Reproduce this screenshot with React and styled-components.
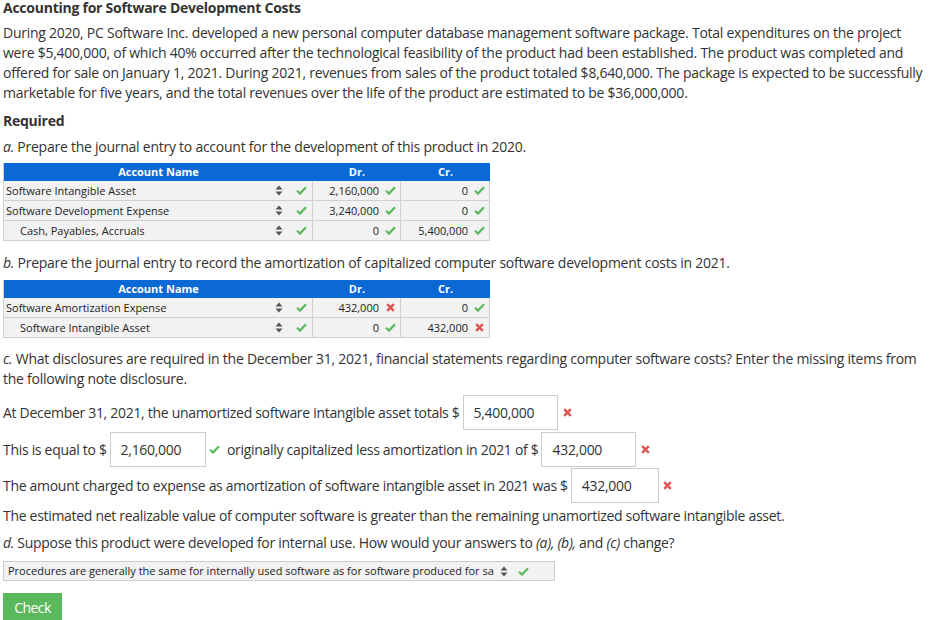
import styled, { createGlobalStyle } from "styled-components";

const GlobalStyle = createGlobalStyle`
  body {
    margin: 0;
    background: #fff;
    font-family: "Open Sans", "Noto Sans", sans-serif;
    color: #333;
  }
`;

const Page = styled.div`
  padding: 0 3px;
  width: 927px;
  font-size: 14px;
  line-height: 20px;
  letter-spacing: -0.25px;
`;

const Title = styled.h3`
  margin: 0;
  font-size: 14px;
  font-weight: 700;
  line-height: 16px;
`;

const Para = styled.p`
  margin: ${(p) => p.$mt || 0}px 0 0;
  font-size: 14px;
  line-height: 20px;
`;

const Line = styled.div`
  margin-top: ${(p) => p.$mt || 0}px;
  font-size: 14px;
  line-height: 20px;
  letter-spacing: -0.3px;
  display: flex;
  align-items: center;
  white-space: pre;
`;

const Heading = styled.p`
  margin: 8px 0 0;
  font-weight: 700;
`;

const Journal = styled.div`
  margin-top: ${(p) => p.$mt}px;
  display: grid;
  grid-template-columns: 309px 88px 89px;
  width: 486px;
  font-size: 11px;
  letter-spacing: 0;
  color: #222;
  border-left: 1px solid #d0d0d0;
`;

const HeadCell = styled.div`
  background: #0b69d6;
  color: #fff;
  font-weight: 700;
  height: 18px;
  line-height: 18px;
  text-align: center;
`;

const Cell = styled.div`
  background: #f2f2f2;
  border-right: 1px solid #d0d0d0;
  border-bottom: 1px solid #d0d0d0;
  height: 20px;
  box-sizing: border-box;
  padding: 0 4px 0 ${(p) => (p.$indent ? 16 : 2)}px;
  display: flex;
  align-items: center;
  justify-content: ${(p) => (p.$num ? "flex-end" : "flex-start")};
  gap: 5px;
  white-space: nowrap;
`;

const Grow = styled.span`
  flex: 1;
`;

const Arrows = styled.span`
  display: inline-flex;
  width: 20px;
  justify-content: center;
`;

const MarkBox = styled.span`
  display: inline-flex;
  width: ${(p) => p.$w || 12}px;
  justify-content: center;
  align-items: center;
`;

const AnswerBox = styled.span`
  display: inline-flex;
  align-items: center;
  height: 35px;
  width: ${(p) => p.$w}px;
  border: 1px solid #ccc;
  padding-left: 10px;
  box-sizing: border-box;
  margin-left: 3px;
`;

const SelectBar = styled.div`
  margin-top: 8px;
  width: 552px;
  height: 20px;
  box-sizing: border-box;
  border: 1px solid #ccc;
  background: #f2f2f2;
  display: flex;
  align-items: center;
  padding-left: 4px;
  font-size: 11px;
  letter-spacing: 0;
  color: #222;
`;

const CheckButton = styled.button`
  margin-top: 12px;
  display: block;
  background: #5cb85c;
  color: #fff;
  border: none;
  font-family: "Open Sans", sans-serif;
  font-size: 14px;
  letter-spacing: -0.6px;
  height: 28px;
  width: 59px;
  padding: 0;
`;

const Tick = ({ w }) => (
  <MarkBox $w={w}>
    <svg width="11" height="9" viewBox="0 0 11 9">
      <path d="M1 4.8 L4 7.6 L10 1.2" fill="none" stroke="#5cb85c" strokeWidth="2.2" />
    </svg>
  </MarkBox>
);

const Cross = ({ w }) => (
  <MarkBox $w={w}>
    <svg width="9" height="9" viewBox="0 0 9 9">
      <path d="M1.2 1.2 L7.8 7.8 M7.8 1.2 L1.2 7.8" fill="none" stroke="#e0524f" strokeWidth="2.4" />
    </svg>
  </MarkBox>
);

const UpDown = () => (
  <Arrows>
    <svg width="8" height="11" viewBox="0 0 8 11">
      <path d="M4 0.5 L7.5 4.5 H0.5 Z M4 10.5 L7.5 6.5 H0.5 Z" fill="#555" />
    </svg>
  </Arrows>
);

const Mark = ({ ok, w }) => (ok ? <Tick w={w} /> : <Cross w={w} />);

const JournalTable = ({ rows, mt }) => (
  <Journal $mt={mt}>
    <HeadCell>Account Name</HeadCell>
    <HeadCell>Dr.</HeadCell>
    <HeadCell>Cr.</HeadCell>
    {rows.map((r) => [
      <Cell key={r.name + "n"} $indent={r.indent}>
        <Grow>{r.name}</Grow>
        <UpDown />
        <Tick w={14} />
      </Cell>,
      <Cell key={r.name + "d"} $num>
        {r.dr}
        <Mark ok={r.drOk} />
      </Cell>,
      <Cell key={r.name + "c"} $num>
        {r.cr}
        <Mark ok={r.crOk} />
      </Cell>,
    ])}
  </Journal>
);

const tableA = [
  { name: "Software Intangible Asset", dr: "2,160,000", drOk: true, cr: "0", crOk: true },
  { name: "Software Development Expense", dr: "3,240,000", drOk: true, cr: "0", crOk: true },
  { name: "Cash, Payables, Accruals", indent: true, dr: "0", drOk: true, cr: "5,400,000", crOk: true },
];

const tableB = [
  { name: "Software Amortization Expense", dr: "432,000", drOk: false, cr: "0", crOk: true },
  { name: "Software Intangible Asset", indent: true, dr: "0", drOk: true, cr: "432,000", crOk: false },
];

export default function App() {
  return (
    <Page>
      <GlobalStyle />
      <Title>Accounting for Software Development Costs</Title>
      <Para $mt={7}>
        During 2020, PC Software Inc. developed a new personal computer database management software package. Total
        expenditures on the project were $5,400,000, of which 40% occurred after the technological feasibility of the
        product had been established. The product was completed and offered for sale on January 1, 2021. During 2021,
        revenues from sales of the product totaled $8,640,000. The package is expected to be successfully marketable for
        five years, and the total revenues over the life of the product are estimated to be $36,000,000.
      </Para>
      <Heading>Required</Heading>
      <Para $mt={6}>
        <i>a.</i> Prepare the journal entry to account for the development of this product in 2020.
      </Para>
      <JournalTable rows={tableA} mt={6} />
      <Para $mt={12}>
        <i>b.</i> Prepare the journal entry to record the amortization of capitalized computer software development costs
        in 2021.
      </Para>
      <JournalTable rows={tableB} mt={7} />
      <Para $mt={11}>
        <i>c.</i> What disclosures are required in the December 31, 2021, financial statements regarding computer
        software costs? Enter the missing items from the following note disclosure.
      </Para>
      <Line $mt={6}>
        At December 31, 2021, the unamortized software intangible asset totals $<AnswerBox $w={95}>5,400,000</AnswerBox>
        <Cross w={20} />
      </Line>
      <Line $mt={2}>
        This is equal to $<AnswerBox $w={96}>2,160,000</AnswerBox>
        <Tick w={18} />
        {" originally capitalized less amortization in 2021 of $"}
        <AnswerBox $w={95}>432,000</AnswerBox>
        <Cross w={18} />
      </Line>
      <Line $mt={1}>
        The amount charged to expense as amortization of software intangible asset in 2021 was $
        <AnswerBox $w={88}>432,000</AnswerBox>
        <Cross w={18} />
      </Line>
      <Line $mt={3}>
        The estimated net realizable value of computer software is greater than the remaining unamortized software
        intangible asset.
      </Line>
      <Line $mt={7}>
        <i>d.</i> Suppose this product were developed for internal use. How would your answers to <i>(a), (b),</i> and{" "}
        <i>(c)</i> change?
      </Line>
      <SelectBar>
        Procedures are generally the same for internally used software as for software produced for sa
        <UpDown />
        <Tick w={20} />
      </SelectBar>
      <CheckButton>Check</CheckButton>
    </Page>
  );
}
